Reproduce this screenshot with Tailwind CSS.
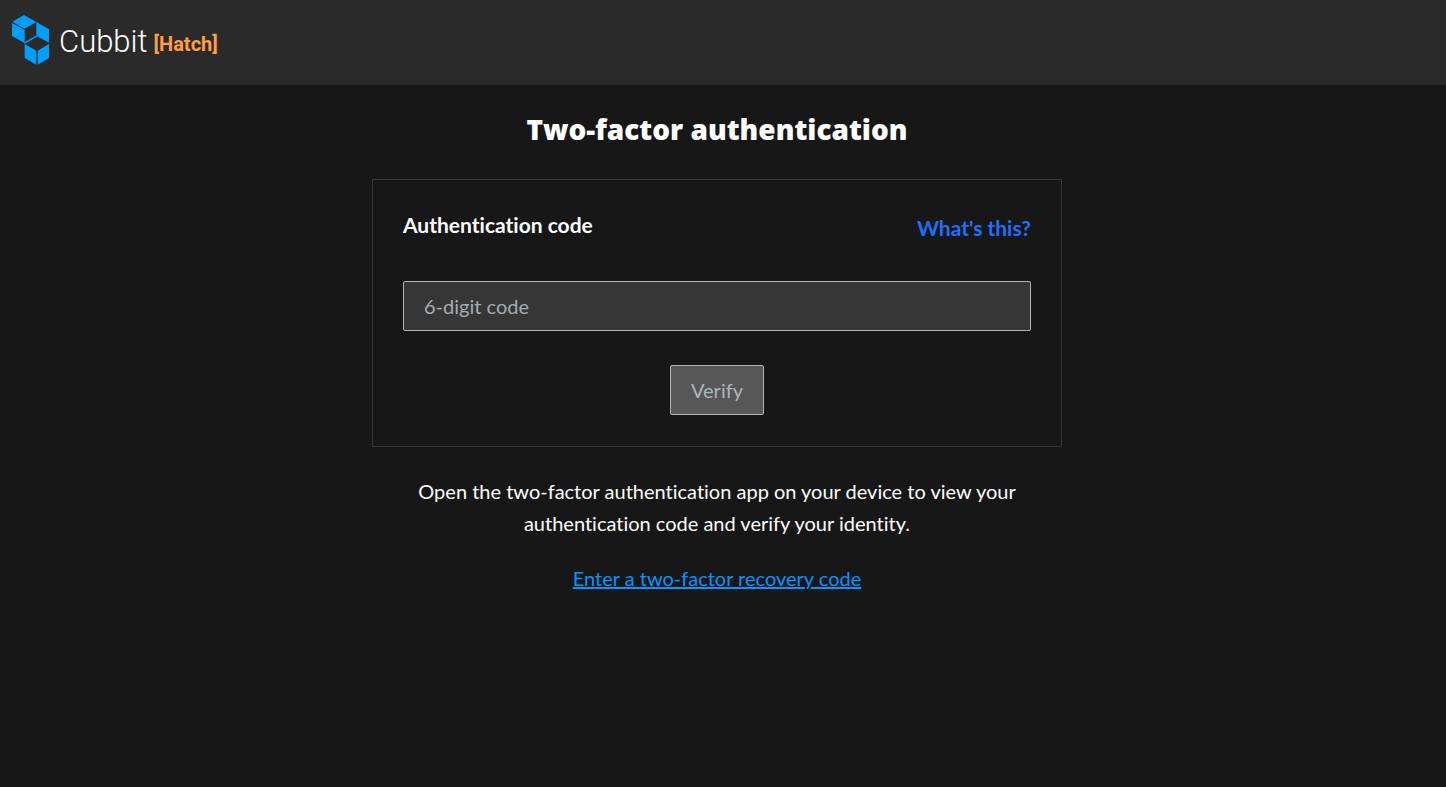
<!DOCTYPE html>
<html lang="en">
<head>
  <meta charset="UTF-8" />
  <meta name="viewport" content="width=device-width, initial-scale=1" />
  <title>Two-factor authentication - Cubbit</title>
  <script src="https://cdn.jsdelivr.net/npm/@tailwindcss/browser@4"></script>
</head>
<body class="min-h-screen bg-[#171717] text-white text-xl font-['Lato',sans-serif] [font-variant-ligatures:none]">

  <!-- Header -->
  <header class="flex items-start h-[85px] bg-[#2a2a2a] px-3 pt-[15px]">
    <a href="/" class="flex items-start gap-[10px]">
      <svg class="w-[37px] h-[50px]" viewBox="0 0 111 150" fill="#009eff" aria-hidden="true">
        <path d="M36 0 73 21 38 41 1 20z" />
        <path d="M0 24 38 45V84L0 63z" />
        <path d="M73 21 111 43V83L73 62z" />
        <path d="M37 87 74 66V61L37 82z" />
        <path d="M38 87 73 107V149L38 129z" />
        <path d="M77 107 111 87V129L77 149z" />
      </svg>
      <span class="text-[31px] leading-[54px] font-light font-['Roboto',sans-serif]">Cubbit</span>
    </a>
    <span class="ml-1.5 pt-[14px] leading-[30px] font-bold text-[#ff9f43] font-['Roboto',sans-serif]">[Hatch]</span>
  </header>

  <!-- Content -->
  <main class="pt-6 pr-3 text-center">
    <div class="max-w-[690px] mx-auto">
      <h1 class="text-[28px] leading-10 font-extrabold font-['Open_Sans',sans-serif]">Two-factor authentication</h1>

      <form class="mt-[30px] border border-[#363636] px-[30px] pt-[30px] pb-[31px]">
        <div class="flex items-start justify-between text-[21px] leading-[30px] font-bold">
          <label for="code">Authentication code</label>
          <a href="#" class="pt-[3px] text-[#1f6fff]">What's this?</a>
        </div>
        <input type="text" id="code" name="code" placeholder="6-digit code" maxlength="6"
               class="block w-full h-[50px] mt-[38px] px-5 rounded-xs border border-[#adb5bd] bg-[#363636] placeholder-[#a5acb2] focus:outline-none">
        <button type="submit" disabled
                class="h-[50px] mt-[34px] px-5 rounded-xs border border-[#adb5bd] bg-[#575757] text-[#adb5bd]">Verify</button>
      </form>

      <p class="mt-7 px-8 leading-8">Open the two-factor authentication app on your device to view your authentication code and verify your identity.</p>
      <a href="#" class="inline-block mt-6 leading-[30px] text-[#0095ff] underline">Enter a two-factor recovery code</a>
    </div>
  </main>

</body>
</html>
